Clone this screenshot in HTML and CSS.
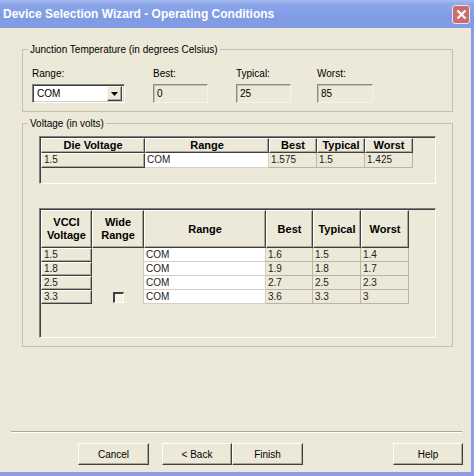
FILE: index.html
```html
<!DOCTYPE html>
<html lang="en">
<head>
	<meta charset="UTF-8">
	<title>Device Selection Wizard</title>
	<link rel="stylesheet" href="styles.css">
</head>
<body>
	<div class="window">
		<div class="titlebar">
			<span class="title">Device Selection Wizard - Operating Conditions</span>
			<span class="close">
				<svg width="11" height="11" viewBox="0 0 11 11"><path d="M1.5 1.5 L9.5 9.5 M9.5 1.5 L1.5 9.5" stroke="#fff" stroke-width="2.2"/></svg>
			</span>
		</div>
		<div class="content">
			<fieldset class="group temp">
				<legend>Junction Temperature (in degrees Celsius)</legend>
				<div class="fields">
					<label>Range:</label>
					<label>Best:</label>
					<label>Typical:</label>
					<label>Worst:</label>
					<div class="combo">
						<span>COM</span>
						<span class="drop"><svg width="7" height="4" viewBox="0 0 7 4"><path d="M0 0 H7 L3.5 4 Z" fill="#000"/></svg></span>
					</div>
					<div class="field">0</div>
					<div class="field">25</div>
					<div class="field wide">85</div>
				</div>
			</fieldset>

			<fieldset class="group volts">
				<legend>Voltage (in volts)</legend>
				<div class="grid die">
					<div class="row">
						<div class="hd">Die Voltage</div>
						<div class="hd">Range</div>
						<div class="hd">Best</div>
						<div class="hd">Typical</div>
						<div class="hd">Worst</div>
					</div>
					<div class="row">
						<div class="c fx">1.5</div>
						<div class="c wt">COM</div>
						<div class="c vl">1.575</div>
						<div class="c vl">1.5</div>
						<div class="c vl">1.425</div>
					</div>
				</div>

				<div class="grid vcci">
					<div class="row">
						<div class="hd">VCCI<br>Voltage</div>
						<div class="hd">Wide<br>Range</div>
						<div class="hd">Range</div>
						<div class="hd">Best</div>
						<div class="hd">Typical</div>
						<div class="hd">Worst</div>
					</div>
					<div class="row">
						<div class="c fx">1.5</div>
						<div class="c wr"></div>
						<div class="c wt">COM</div>
						<div class="c vl">1.6</div>
						<div class="c vl">1.5</div>
						<div class="c vl">1.4</div>
					</div>
					<div class="row">
						<div class="c fx">1.8</div>
						<div class="c wr"></div>
						<div class="c wt">COM</div>
						<div class="c vl">1.9</div>
						<div class="c vl">1.8</div>
						<div class="c vl">1.7</div>
					</div>
					<div class="row">
						<div class="c fx">2.5</div>
						<div class="c wr"></div>
						<div class="c wt">COM</div>
						<div class="c vl">2.7</div>
						<div class="c vl">2.5</div>
						<div class="c vl">2.3</div>
					</div>
					<div class="row">
						<div class="c fx">3.3</div>
						<div class="c wr"><span class="check"></span></div>
						<div class="c wt">COM</div>
						<div class="c vl">3.6</div>
						<div class="c vl">3.3</div>
						<div class="c vl">3</div>
					</div>
				</div>
			</fieldset>

			<div class="sep"></div>
			<div class="buttons">
				<button class="btn">Cancel</button>
				<button class="btn back">&lt; Back</button>
				<button class="btn finish">Finish</button>
				<button class="btn help">Help</button>
			</div>
		</div>
	</div>
</body>
</html>
```

FILE: styles.css
```css
body{
	margin:0;
	font-family:"Liberation Sans", Arial, sans-serif;
	font-size:10px;
	color:#000;
}
.window{
	width:474px;
	height:476px;
	display:flex;
	flex-direction:column;
}
/* title bar */
.titlebar{
	height:28px;
	flex:none;
	display:flex;
	align-items:center;
	justify-content:space-between;
	padding:0 4px 0 3px;
	box-sizing:border-box;
	background:linear-gradient(#a9bcf0, #8ca6ea 4px, #7f9be4 60%, #829de5);
}
.title{
	color:#fff;
	font-weight:bold;
	font-size:12px;
}
.close{
	width:18px;
	height:19px;
	box-sizing:border-box;
	border:1px solid #efe4ec;
	border-radius:3px;
	background:#c96d70;
	display:flex;
	align-items:center;
	justify-content:center;
}
.content{
	flex:1;
	display:flex;
	flex-direction:column;
	background:#ece9d8;
	border-right:3px solid #8d9ce2;
	border-bottom:4px solid #8d9ce2;
}
/* group boxes */
.group{
	margin:15px 0 0 22px;
	width:431px;
	min-width:0;
	box-sizing:border-box;
	padding:0 0 8px;
	border:1px solid #c3c0b0;
}
.group legend{
	margin-left:5px;
	padding:0 2px;
	line-height:13px;
}
.fields{
	display:grid;
	grid-template-columns:121px 83px 81px 56px;
	grid-template-rows:13px 19px;
	row-gap:3px;
	padding:12px 0 0 9px;
}
.combo{
	width:93px;
	height:19px;
	box-sizing:border-box;
	background:#fff;
	border:1px solid;
	border-color:#808080 #fff #fff #808080;
	box-shadow:inset 1px 1px #404040, inset -1px -1px #d4d0c8;
	display:flex;
	align-items:center;
	justify-content:space-between;
	padding:2px 2px 2px 4px;
}
.drop{
	width:15px;
	height:15px;
	box-sizing:border-box;
	background:#ece9d8;
	border:1px solid;
	border-color:#f6f5ef #404040 #404040 #f6f5ef;
	box-shadow:inset -1px -1px #aca899;
	display:flex;
	align-items:center;
	justify-content:center;
}
.field{
	width:55px;
	height:19px;
	box-sizing:border-box;
	border:1px solid;
	border-color:#8e8b7d #f4f3ee #f4f3ee #8e8b7d;
	box-shadow:inset 1px 1px #c4c1b1;
	padding-left:3px;
	line-height:17px;
}
.field.wide{
	width:56px;
}
.volts{
	margin-top:5px;
}
/* grids */
.grid{
	margin-left:16px;
	width:397px;
	box-sizing:border-box;
	border:1px solid;
	border-color:#7e7e7e #fff #fff #7e7e7e;
	box-shadow:inset 1px 1px #404040;
	padding:1px 0 0 1px;
}
.die{
	margin-top:6px;
	height:48px;
}
.vcci{
	margin-top:24px;
	height:130px;
}
.row{
	display:grid;
}
.die .row{
	grid-template-columns:104px 124px 48px 48px 48px;
}
.vcci .row{
	grid-template-columns:51px 52px 122px 47px 48px 48px;
}
.hd{
	box-sizing:border-box;
	border:1px solid;
	border-color:#fff #404040 #404040 #fff;
	box-shadow:inset -1px -1px #aca899;
	font-weight:bold;
	font-size:11px;
	line-height:13px;
	display:flex;
	align-items:center;
	justify-content:center;
	text-align:center;
}
.die .hd{
	height:15px;
}
.vcci .hd{
	height:38px;
}
.c{
	box-sizing:border-box;
	padding-left:2px;
	white-space:nowrap;
	color:#222;
}
.die .c{
	height:15px;
	line-height:14px;
}
.vcci .c{
	height:14px;
	line-height:13px;
}
.fx{
	border:1px solid;
	border-color:#fff #404040 #404040 #fff;
	box-shadow:inset -1px -1px #aca899;
	line-height:12px !important;
}
.wt{
	background:#fff;
	border-right:1px solid #d4d0c8;
	border-bottom:1px solid #d4d0c8;
}
.vl{
	border-right:1px solid #b9b6a6;
	border-bottom:1px solid #b9b6a6;
}
.wr{
	border-right:1px solid #cfccbd;
	display:flex;
	justify-content:center;
	align-items:center;
}
.check{
	width:11px;
	height:11px;
	box-sizing:border-box;
	border-top:2px solid #404040;
	border-left:2px solid #404040;
	border-right:1px solid #fff;
	border-bottom:1px solid #fff;
	background:#f2f1ea;
}
/* bottom */
.sep{
	margin:auto 9px 0 11px;
	border-top:1px solid #aca899;
	border-bottom:1px solid #fff;
}
.buttons{
	display:flex;
	padding:10px 8px 7px 78px;
}
.btn{
	width:71px;
	height:22px;
	box-sizing:border-box;
	padding:0;
	border:1px solid;
	border-color:#fff #404040 #404040 #fff;
	box-shadow:inset -1px -1px #aca899;
	background:#ece9d8;
	font:inherit;
	color:#000;
}
.back{
	width:70px;
	margin-left:13px;
}
.help{
	width:70px;
	margin-left:auto;
}
```
